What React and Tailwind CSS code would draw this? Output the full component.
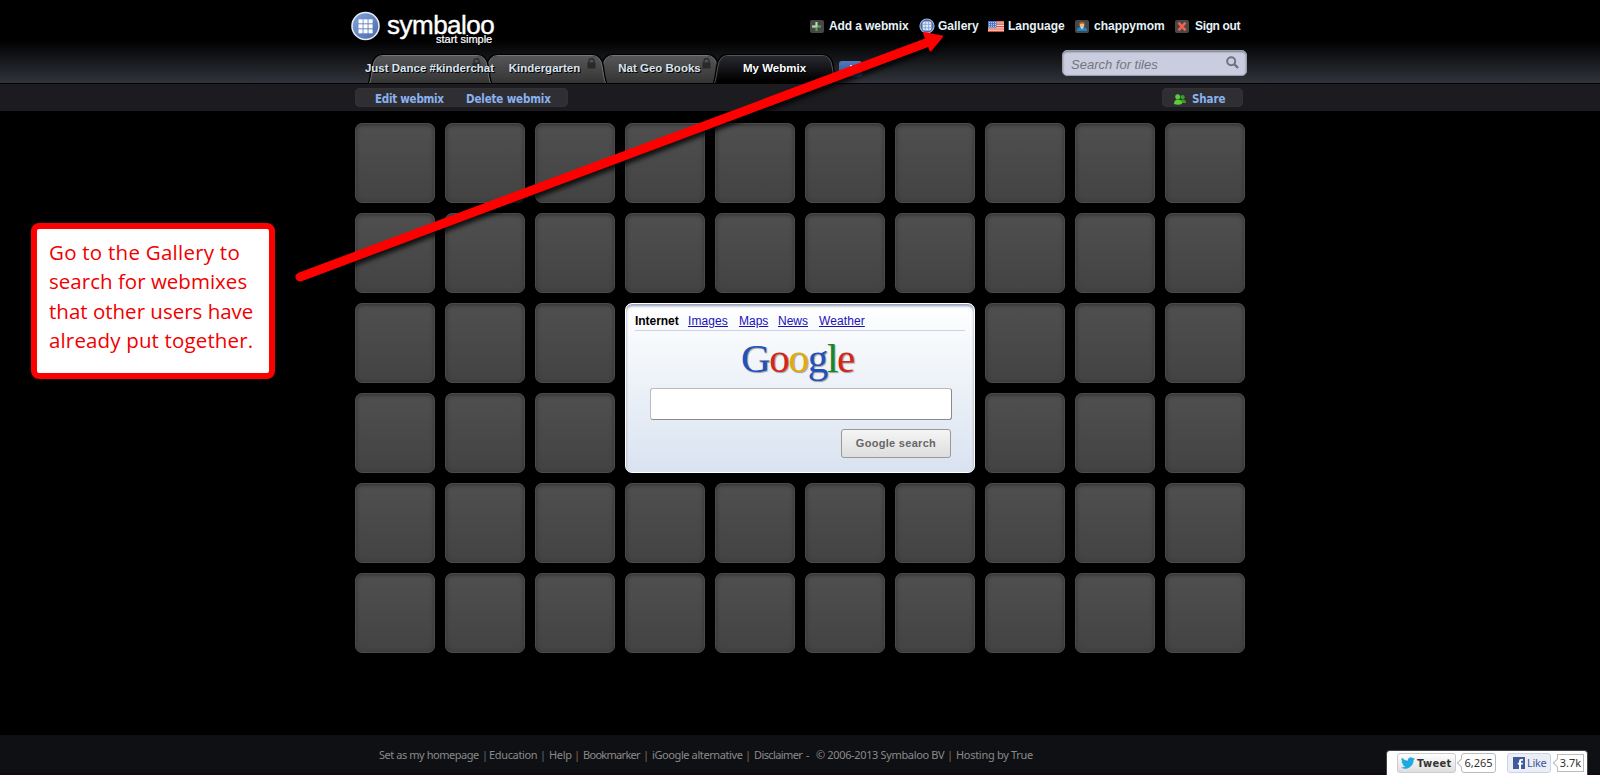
import React from "react";

const ARIAL = "font-['Liberation_Sans',Arial,sans-serif]";

function GridGlobe({ className }) {
  return (
    <svg viewBox="0 0 30 30" className={className}>
      <defs>
        <linearGradient id="globe" x1="0" y1="0" x2="1" y2="1">
          <stop offset="0" stopColor="#86a5da" />
          <stop offset="1" stopColor="#4768ad" />
        </linearGradient>
      </defs>
      <circle cx="14.500" cy="15" r="13.500" fill="url(#globe)" stroke="#e4e9f3" strokeWidth="1.600" />
      {[0, 1, 2].map((r) =>
        [0, 1, 2].map((c) => (
          <rect key={`${r}${c}`} x={7.5 + c * 5} y={8.3 + r * 5} width="4.1" height="4" fill="#fff" />
        ))
      )}
    </svg>
  );
}

function SmallGlobe() {
  return (
    <svg viewBox="0 0 16 16" className="-ml-px -mt-px size-4">
      <circle cx="8" cy="8" r="7" fill="#4a69a5" stroke="#9db4dc" strokeWidth="1.2" />
      <rect x="3.6" y="3.6" width="8.8" height="8.8" rx="2" fill="#dfe8f6" />
      <path d="M6.3 3.6v8.8M9.7 3.6v8.8M3.6 6.3h8.8M3.6 9.7h8.8" stroke="#7893c6" strokeWidth="0.7" />
    </svg>
  );
}

function PlusIcon() {
  return (
    <svg viewBox="0 0 14 14" className="size-3.5">
      <rect width="14" height="13" rx="2" fill="#474747" />
      <path d="M6.500 2v9M2 6.500h9" stroke="#5f9d58" strokeWidth="2" />
      <path d="M6.500 2v5M2 6.500h5" stroke="#b4d6ac" strokeWidth="2" />
    </svg>
  );
}

function FlagIcon() {
  return (
    <svg viewBox="0 0 16 11" className="h-[11px] w-4">
      <rect width="16" height="11" fill="#f6e9e6" />
      <path d="M0 .8h16M0 3.200h16M0 5.600h16M0 8h16M0 10.300h16" stroke="#e0452f" strokeWidth="1.200" />
      <rect width="8.500" height="6.600" fill="#4a76c6" />
      <path d="M1 1.500h7M1 3.400h7M1 5.300h7" stroke="#dce8fa" strokeWidth="0.800" strokeDasharray="1 1" />
    </svg>
  );
}

function UserIcon() {
  return (
    <svg viewBox="0 0 14 14" className="size-3.5">
      <rect width="14" height="13" rx="2" fill="#474747" />
      <path d="M2 11V9.500Q2.500 7.500 5 7h4q2.500 .5 3 2.500V11z" fill="#1d86cc" />
      <path d="M5.500 7h3L7 9.500z" fill="#f4f4f4" />
      <rect x="4.700" y="2.500" width="4.600" height="5" rx="2" fill="#efb98d" />
      <path d="M4.200 5V3.200Q4.700 1.700 7 1.700t2.800 1.700V5L9 3.800H5.500z" fill="#a5692a" />
    </svg>
  );
}

function CrossIcon() {
  return (
    <svg viewBox="0 0 14 14" className="size-3.5">
      <rect width="14" height="13" rx="2" fill="#474747" />
      <path d="M3.500 2.700l7 7.600M10.500 2.700l-7 7.600" stroke="#f0604f" strokeWidth="2.600" />
    </svg>
  );
}

function NavItem({ width, icon, iconWidth, children, spacing = "" }) {
  return (
    <a className={`flex h-4 shrink-0 items-center ${width}`}>
      <span className={`mt-px flex shrink-0 items-center ${iconWidth}`}>{icon}</span>
      <span className={`whitespace-nowrap leading-4 ${spacing}`}>{children}</span>
    </a>
  );
}

function Lock() {
  return (
    <svg viewBox="0 0 9 11" className="absolute right-[11px] top-1 h-[11px] w-[9px]">
      <path d="M2 5V3a2.500 2.500 0 015 0v2" fill="none" stroke="#292929" strokeWidth="1.300" />
      <rect x="0.500" y="4.500" width="8" height="6" fill="#292929" />
    </svg>
  );
}

function Tab({ label, active, layer }) {
  return (
    <div className={`relative -mr-[9px] flex h-[30px] w-[124px] shrink-0 items-center justify-center ${layer}`}>
      <svg viewBox="0 0 124 30" className="absolute inset-0 h-[30px] w-[124px]">
        <defs>
          <linearGradient id="tabIdle" x1="0" y1="0" x2="0" y2="1">
            <stop offset="0" stopColor="#575757" />
            <stop offset="1" stopColor="#333" />
          </linearGradient>
          <linearGradient id="tabActive" x1="0" y1="0" x2="0" y2="1">
            <stop offset="0" stopColor="#2a2b33" />
            <stop offset="0.900" stopColor="#000" />
          </linearGradient>
        </defs>
        <path
          d="M0 30C2 28 2.500 22 4 12Q5.500 1 15 1H109Q118.500 1 120 12C121.500 22 122 28 124 30z"
          fill={active ? "url(#tabActive)" : "url(#tabIdle)"}
          stroke="#000"
          strokeWidth="2"
        />
        <path
          d="M1.500 29C3 26 3.500 20 5 12Q6.500 1.500 15 1.500H109Q117.500 1.500 119 12C120.500 20 121 26 122.500 29"
          fill="none"
          stroke={active ? "#55565c" : "#777"}
          strokeWidth="1"
        />
      </svg>
      {!active && <Lock />}
      <span
        className={`relative -ml-px -mt-[3px] whitespace-nowrap text-[11.500px] font-bold leading-4 [text-shadow:1px_1px_0_#000] ${
          active ? "text-white" : "text-[#d9e3ee]"
        }`}
      >
        {label}
      </span>
    </div>
  );
}

function PeopleIcon() {
  return (
    <svg viewBox="0 0 12 11" className="mt-px h-[11px] w-3">
      <circle cx="8.600" cy="3.200" r="2.100" fill="#36a020" />
      <path d="M6 9q0-3.500 3-3.500T12 9z" fill="#36a020" />
      <circle cx="3.700" cy="2.800" r="2.500" fill="#5ccd3a" />
      <path d="M0 10q0-4.500 4-4.500T8 10q-4 1.500-8 0z" fill="#5ccd3a" />
    </svg>
  );
}

function Tile() {
  return (
    <div className="size-20 rounded-[7px] border border-[#4b4b4b] bg-linear-to-b from-[#4f4f4f] to-[#434343] shadow-[inset_0_1px_4px_#303030]" />
  );
}

function GoogleCard() {
  return (
    <div className="col-span-4 col-start-4 row-span-2 row-start-3 h-[170px] w-[350px] rounded-[7px] border border-white bg-linear-to-b from-white to-[#d9e3f0] px-[9px] shadow-[inset_0_2px_3px_#8f9ab3]">
      <div className="mt-[9px] flex h-[18px] w-[330px] border-b border-[#c9d3ea] text-[12px] leading-4 text-[#1a10bb]">
        <span className="w-[53px] font-bold text-black">
          <span className="inline-block tracking-[-0.050px]">Internet</span>
        </span>
        <span className="w-[51px]"><a className="tracking-[0.100px] underline">Images</a></span>
        <span className="w-[39px]"><a className="underline">Maps</a></span>
        <span className="w-[41px]"><a className="underline">News</a></span>
        <span><a className="tracking-[0.100px] underline">Weather</a></span>
      </div>
      <div className="ml-[106px] mt-px h-[57px] whitespace-nowrap font-['Liberation_Serif',serif] text-[41px] leading-[52px] tracking-[-1.300px] [text-shadow:1px_1px_1px_#999]">
        <span className="text-[#2450bd]">G</span>
        <span className="text-[#d32518]">o</span>
        <span className="text-[#e0ac08]">o</span>
        <span className="text-[#2450bd]">g</span>
        <span className="text-[#14882a]">l</span>
        <span className="text-[#d32518]">e</span>
      </div>
      <div className="ml-[15px] -mt-px h-8 w-[302px] rounded-[3px] border border-b-[#8b8b8b] border-l-[#bbb] border-r-[#8b8b8b] border-t-[#bbb] bg-white" />
      <button className="ml-[206px] mt-[9px] block h-[29px] w-[110px] rounded-[3px] border border-[#999] bg-linear-to-b from-[#f5f5f5] to-[#dedede] text-[11px] font-bold tracking-[0.300px] text-[#666]">
        Google search
      </button>
    </div>
  );
}

const emptyTiles = Array.from({ length: 52 }, (_, i) => i);

function Arrow() {
  return (
    <svg viewBox="0 0 1600 775" className="pointer-events-none absolute left-0 top-0 z-40 h-[775px] w-[1600px]">
      <g fill="#f00" className="[filter:drop-shadow(2px_4px_2px_rgba(0,0,0,0.75))]">
        <path d="M300 277L930 41.500" stroke="#f00" strokeWidth="9" strokeLinecap="round" />
        <path d="M924 33L942 36.500L930.500 50.500z" stroke="#f00" strokeWidth="2" strokeLinejoin="round" />
      </g>
    </svg>
  );
}

function Footer() {
  return (
    <footer className="h-10 border-b-2 border-[#160713] bg-[#0f1013] pl-[379px]">
      <div className="flex h-10 items-center whitespace-nowrap font-['Noto_Sans',sans-serif] text-[11px] leading-4 text-[#8a8a8a]">
        <span className="w-[103px] tracking-[-0.450px]">Set as my homepage</span>
        <span className="w-[7px] text-[#4f7085]">|</span>
        <span className="w-[51px] tracking-[-0.350px]">Education</span>
        <span className="w-[9px] text-[#4f7085]">|</span>
        <span className="w-[25px] tracking-[-0.350px]">Help</span>
        <span className="w-[9px] text-[#8a6a48]">|</span>
        <span className="w-[60px] tracking-[-0.700px]">Bookmarker</span>
        <span className="w-[9px] text-[#8a6a48]">|</span>
        <span className="w-[93px] tracking-[-0.400px]">iGoogle alternative</span>
        <span className="w-[9px] text-[#8a6a48]">|</span>
        <span className="w-[52px] tracking-[-0.600px]">Disclaimer</span>
        <span className="w-[10px]">-</span>
        <span className="w-[131px] tracking-[-0.350px]">© 2006-2013 Symbaloo BV</span>
        <span className="w-[9px] text-[#8a6a48]">|</span>
        <span className="tracking-[-0.300px]">Hosting by True</span>
      </div>
    </footer>
  );
}

function Count({ children, className }) {
  return (
    <span className={`relative flex items-center justify-center border border-[#bbb] bg-white text-[#333] ${className}`}>
      <span className="absolute -left-[4px] size-[6px] rotate-45 border-b border-l border-[#bbb] bg-white" />
      {children}
    </span>
  );
}

function SocialBar() {
  return (
    <div className="absolute left-[1386px] top-[750px] z-30 flex h-[25px] w-[202px] rounded-t-[4px] border border-b-0 border-[#444] bg-white pl-[10px] pt-[2px] font-['Noto_Sans',sans-serif] leading-4">
      <span className="flex h-5 w-[59px] items-center rounded-[3px] border border-[#ccc] bg-linear-to-b from-white to-[#dedede] pl-[3px] font-['DejaVu_Sans_Condensed','DejaVu_Sans',sans-serif] text-[11px] font-bold text-[#333]">
        <svg viewBox="0 0 24 24" className="mr-[2px] h-[14px] w-[14px] shrink-0" fill="#1ea9e1">
          <path d="M24 4.600a10 10 0 01-2.800.8 5 5 0 002.100-2.700 10 10 0 01-3.100 1.200A4.900 4.900 0 0011.800 8.300 14 14 0 011.700 3.100a4.900 4.900 0 001.500 6.600 5 5 0 01-2.200-.6 4.900 4.900 0 003.900 4.900 5 5 0 01-2.200.1 4.900 4.900 0 004.600 3.400A10 10 0 010 19.500 14 14 0 0021.500 7.100 10 10 0 0024 4.600z" />
        </svg>
        <span className="mt-px tracking-[0.350px]">Tweet</span>
      </span>
      <Count className="ml-[5px] h-5 w-[35px] rounded-[3px] text-[11px]">6,265</Count>
      <span className="ml-[11px] flex h-5 w-[44px] items-center rounded-[3px] border border-[#cad4e7] bg-[#eceef5] pl-[5px] text-[11px] text-[#3b5998]">
        <svg viewBox="0 0 12 12" className="mr-[2px] size-3 shrink-0">
          <rect width="12" height="12" fill="#3f5b9c" />
          <path d="M8 12V7.500H9.800V5.700H8V4.500q0-.8 .9-.8h1V2H8.300Q6 2 6 4.200v1.500H4.800v1.800H6V12z" fill="#fff" />
        </svg>
        <span className="tracking-[-0.300px]">Like</span>
      </span>
      <Count className="ml-[6px] mt-px h-[18px] w-[27px] text-[11px]">3.7k</Count>
    </div>
  );
}

export default function App() {
  return (
    <div className={`relative h-[775px] w-[1600px] overflow-hidden bg-black ${ARIAL}`}>
      <header className="h-[84px] border-b border-black bg-[linear-gradient(#000_40px,#30333b_83px)] pl-[351px]">
        <div className="flex h-[54px]">
          <GridGlobe className="mt-[11px] size-[30px]" />
          <div className="ml-[6px] mt-[14px] w-[423px] text-white">
            <div className="h-[20px] text-[26px] leading-[22px] tracking-[-0.500px] [-webkit-text-stroke:0.400px_white]">symbaloo</div>
            <div className="ml-[49px] text-[11px] leading-[11px] [-webkit-text-stroke:0.200px_white]">start simple</div>
          </div>
          <nav className="mt-[18px] flex text-[12px] font-bold text-[#e6f2f8]">
            <NavItem width="w-[110px]" iconWidth="w-[19px]" spacing="tracking-[-0.100px]" icon={<PlusIcon />}>Add a webmix</NavItem>
            <NavItem width="w-[68px]" iconWidth="w-[18px]" icon={<SmallGlobe />}>Gallery</NavItem>
            <NavItem width="w-[87px]" iconWidth="w-5" icon={<FlagIcon />}>Language</NavItem>
            <NavItem width="w-[100px]" iconWidth="w-[19px]" icon={<UserIcon />}>chappymom</NavItem>
            <NavItem width="w-[70px]" iconWidth="w-5" spacing="tracking-[-0.350px]" icon={<CrossIcon />}>Sign out</NavItem>
          </nav>
        </div>
        <div className="-mt-1 flex h-[34px]">
          <div className="ml-[17px] mt-1 flex">
            <Tab label="Just Dance #kinderchat" layer="z-[4]" />
            <Tab label="Kindergarten" layer="z-[3]" />
            <Tab label="Nat Geo Books" layer="z-[2]" />
            <Tab label="My Webmix" layer="z-[5]" active />
          </div>
          <div className="ml-[11px] mt-[11px] flex h-[16px] w-[23px] justify-center rounded-[3px] bg-linear-to-b from-[#5578b8] to-[#2d4f91]">
            <svg viewBox="0 0 10 10" className="mt-[3px] size-[10px]">
              <path d="M5 1v8M1 5h8" stroke="#c9d7ef" strokeWidth="2" />
            </svg>
          </div>
          <div className="ml-[200px] flex h-[26px] w-[185px] items-center rounded-[5px] border border-[#9b9dab] bg-[#cacce0] pl-2 pr-[7px] shadow-[inset_0_1px_2px_#777986]">
            <span className="mt-1 grow whitespace-nowrap text-[13px] italic leading-4 text-[#74757c]">Search for tiles</span>
            <svg viewBox="0 0 13 13" className="-mt-px size-[13px]">
              <circle cx="5.200" cy="5.200" r="4" fill="none" stroke="#70727e" strokeWidth="2" />
              <path d="M8.200 8.200l3.800 3.800" stroke="#70727e" strokeWidth="2.400" />
            </svg>
          </div>
        </div>
      </header>

      <div className="flex h-[27px] items-center bg-[#1c1c20] pl-[355px] font-['DejaVu_Sans_Condensed','DejaVu_Sans',sans-serif] text-[11.500px] font-bold leading-4 text-[#8ab2f0]">
        <div className="flex h-[19px] w-[213px] items-center rounded-[5px] bg-[#2f2f33] pl-5 pt-[2px] shadow-[inset_0_0_2px_#3d3d42]">
          <span className="w-[91px] whitespace-nowrap tracking-[-0.250px]">Edit webmix</span>
          <span className="whitespace-nowrap tracking-[-0.150px]">Delete webmix</span>
        </div>
        <div className="ml-[594px] flex h-[19px] w-[81px] items-center rounded-[5px] bg-[#2f2f33] pl-3 pt-[2px] shadow-[inset_0_0_2px_#3d3d42]">
          <PeopleIcon />
          <span className="ml-[6px] tracking-[-0.100px]">Share</span>
        </div>
      </div>

      <main className="h-[624px] pl-[355px] pt-3">
        <div className="grid w-[890px] grid-cols-[repeat(10,80px)] grid-rows-[repeat(6,80px)] gap-[10px]">
          <GoogleCard />
          {emptyTiles.map((i) => (
            <Tile key={i} />
          ))}
        </div>
      </main>

      <Footer />
      <SocialBar />

      <aside className="absolute left-[31px] top-[223px] z-30 h-[156px] w-[244px] whitespace-nowrap rounded-[8px] border-[6px] border-[#f00] bg-white pl-3 pt-[9px] font-['Open_Sans',sans-serif] text-[20.500px] leading-[29.300px] text-[#f00000]">
        <div className="tracking-[0.250px]">Go to the Gallery to</div>
        <div className="tracking-[0.020px]">search for webmixes</div>
        <div>that other users have</div>
        <div className="tracking-[0.150px]">already put together.</div>
      </aside>

      <Arrow />
    </div>
  );
}
